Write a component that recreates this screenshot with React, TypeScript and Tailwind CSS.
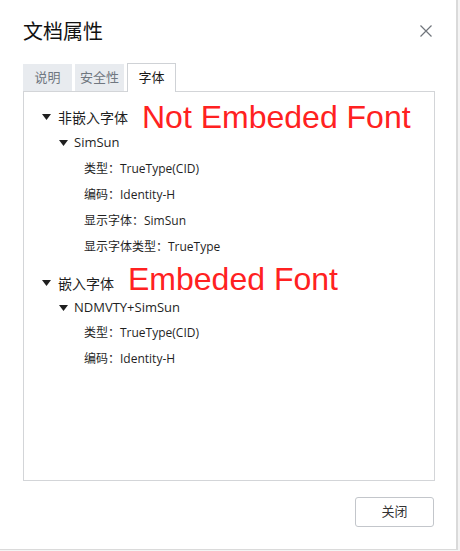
import React from 'react';

type Group = {
  title: string;
  note: string;
  noteClass: string;
  font: string;
  fontRow: string;
  props: string[];
  className?: string;
};

const groups: Group[] = [
  {
    title: '非嵌入字体',
    note: 'Not Embeded Font',
    noteClass: 'left-[118px] top-[-3px]',
    font: 'SimSun',
    fontRow: 'h-[26px]',
    props: ['类型：TrueType(CID)', '编码：Identity-H', '显示字体：SimSun', '显示字体类型：TrueType'],
  },
  {
    title: '嵌入字体',
    note: 'Embeded Font',
    noteClass: 'left-[104px] top-[-7px]',
    font: 'NDMVTY+SimSun',
    fontRow: 'h-[24px]',
    props: ['类型：TrueType(CID)', '编码：Identity-H'],
    className: 'mt-[10px]',
  },
];

function Caret() {
  return (
    <svg width="9" height="6" viewBox="0 0 9 6" className="shrink-0">
      <path d="M0 0 H9 L4.5 6 Z" fill="#1f1f1f" />
    </svg>
  );
}

function FontGroup({ group }: { group: Group }) {
  return (
    <div className={group.className}>
      {/* category row, the red label is an annotation laid over it */}
      <div className="relative flex h-[26px] items-center pl-[18px]">
        <Caret />
        <span className="ml-[7px] text-[14px] text-[#1f1f1f]">{group.title}</span>
        <span
          className={`absolute ${group.noteClass} whitespace-nowrap font-['Liberation_Sans',Arial,sans-serif] text-[32px] leading-none text-[#ff2121]`}
        >
          {group.note}
        </span>
      </div>
      <div className={`flex ${group.fontRow} items-center pl-[35px]`}>
        <Caret />
        <span className="ml-[6px] text-[13px] text-[#1f1f1f]">{group.font}</span>
      </div>
      {group.props.map((p, i) => (
        <div key={i} className="flex h-[26px] items-center pl-[60px] text-[12px] text-[#1f1f1f]">
          {p}
        </div>
      ))}
    </div>
  );
}

export default function App() {
  return (
    <div className="h-[551px] w-[460px] bg-[#f4f4f4] font-['Open_Sans','Noto_Sans_CJK_SC',sans-serif]">
      <div className="flex h-[550px] w-[458px] flex-col border-r-2 border-b border-[#dadada] bg-white">
        {/* Header */}
        <div className="flex items-start justify-between pt-[20px] pl-[23px] pr-[24px]">
          <h1 className="text-[20px] leading-[24px] text-[#111]">文档属性</h1>
          <button className="mt-[5px]">
            <svg width="12" height="12" viewBox="0 0 12 12">
              <path d="M0.5 0.5 L11.5 11.5 M11.5 0.5 L0.5 11.5" stroke="#70757b" strokeWidth="1.2" />
            </svg>
          </button>
        </div>

        {/* Tabs */}
        <div className="mt-[19px] ml-[23px] flex items-end gap-[3px] text-[13px]">
          <div className="flex h-[27px] w-[49px] items-center justify-center bg-[#e8ebef] text-[#707780]">说明</div>
          <div className="flex h-[27px] w-[49px] items-center justify-center bg-[#e8ebef] text-[#707780]">安全性</div>
          <div className="relative z-10 -mb-px flex h-[29px] w-[49px] items-center justify-center border border-b-0 border-[#cfd2d6] bg-white text-[#1a1a1a]">
            字体
          </div>
        </div>

        {/* Panel */}
        <div className="mx-[23px] h-[390px] w-[412px] border border-[#d3d5d8] pt-[12px]">
          {groups.map((g) => (
            <FontGroup key={g.title} group={g} />
          ))}
        </div>

        {/* Footer */}
        <div className="mt-[16px] flex justify-end pr-[22px]">
          <button className="h-[30px] w-[79px] rounded-[3px] border border-[#c3c6cb] text-[13px] text-[#333]">
            关闭
          </button>
        </div>
      </div>
    </div>
  );
}
